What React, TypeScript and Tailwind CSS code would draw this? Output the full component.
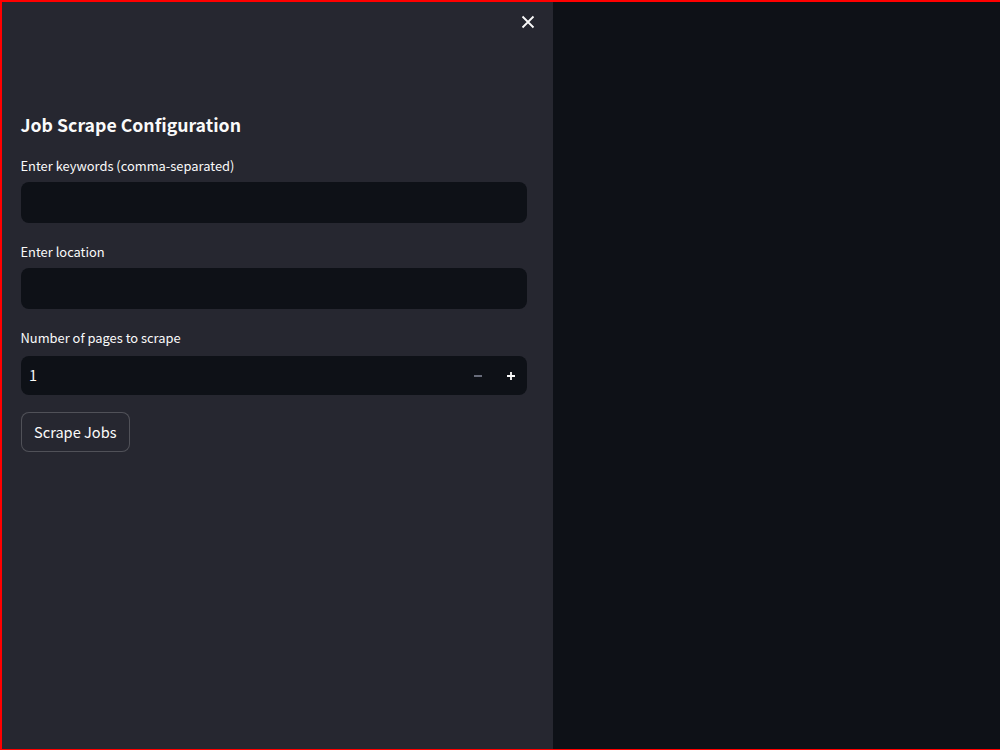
export default function App() {
  return (
    <div className="h-[750px] w-[1000px] overflow-hidden border-t-2 border-b border-l-2 border-[#ff0000] bg-[#0e1117] font-['Noto_Sans_CJK_JP',sans-serif] text-[#fafafa]">
      <div className="flex h-full">
        <aside className="flex h-full w-[551px] flex-col bg-[#262730] pl-[18.5px] pr-[26px]">
          {/* Close button */}
          <div className="-mr-[10px] flex h-[107px] justify-end pt-[11px]">
            <button className="flex h-[18px] w-[18px] items-center justify-center">
              <svg width="18" height="18" viewBox="0 0 18 18" fill="none" stroke="#fafafa" strokeWidth="1.8">
                <path d="M3.5 3.5 14.5 14.5M14.5 3.5 3.5 14.5" />
              </svg>
            </button>
          </div>

          <h2 className="h-[32px] text-[17.7px] font-semibold leading-[30px]">Job Scrape Configuration</h2>

          <label className="mt-[15px] h-[20px] text-[12.9px] leading-[20px]">Enter keywords (comma-separated)</label>
          <input className="mt-[6px] h-[41px] w-full rounded-lg bg-[#0e1117] outline-none" />

          <label className="mt-[19px] h-[20px] text-[12.9px] leading-[20px]">Enter location</label>
          <input className="mt-[6px] h-[41px] w-full rounded-lg bg-[#0e1117] outline-none" />

          <label className="mt-[19px] h-[20px] text-[12.9px] leading-[20px]">Number of pages to scrape</label>
          <div className="mt-[8px] flex h-[39px] w-full items-center rounded-lg bg-[#0e1117] pl-[8.5px]">
            <span className="flex-1 pb-[2px] text-[14.5px] leading-[37px]">1</span>
            <div className="flex items-center">
              <button className="flex h-[39px] w-[33px] items-center justify-center">
                <svg width="10" height="10" viewBox="0 0 10 10" fill="none" stroke="#808495" strokeWidth="1.6">
                  <path d="M1 5H9" />
                </svg>
              </button>
              <button className="flex h-[39px] w-[33px] items-center justify-center">
                <svg width="10" height="10" viewBox="0 0 10 10" fill="none" stroke="#fafafa" strokeWidth="1.8">
                  <path d="M1 5H9M5 1V9" />
                </svg>
              </button>
            </div>
          </div>

          <button className="mt-[17px] h-[40px] w-[109.5px] rounded-lg border border-[#fafafa33] bg-[#262730] text-[14.6px]">
            Scrape Jobs
          </button>
        </aside>
        <main className="flex-1" />
      </div>
    </div>
  );
}
